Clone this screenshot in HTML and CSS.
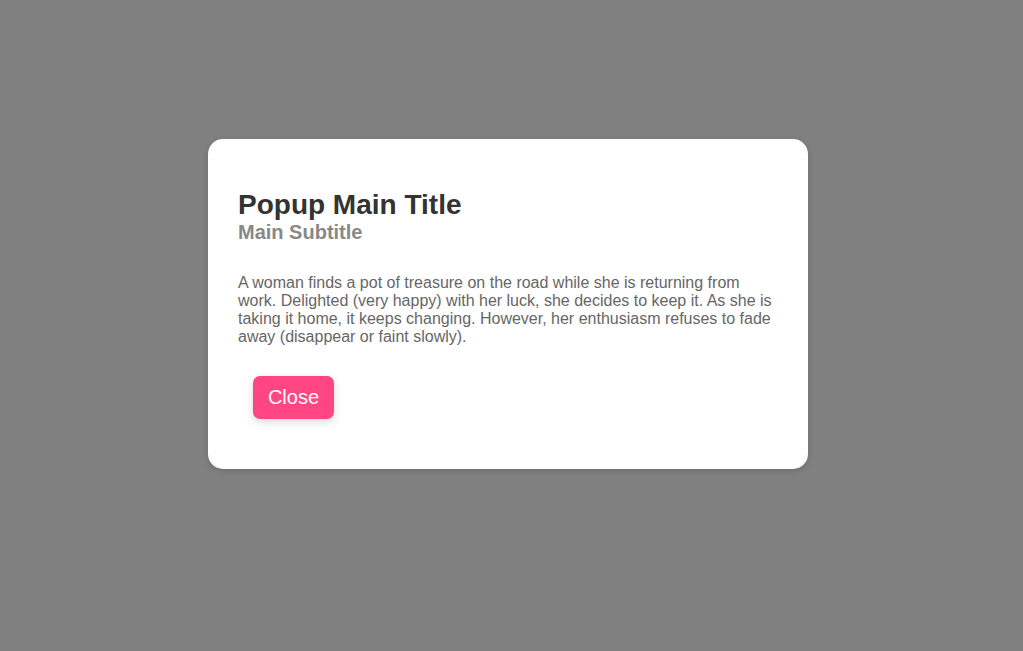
FILE: index.html
```html
<!DOCTYPE html>
<html>
<head>
<meta charset="utf-8">
<link rel="stylesheet" href="styles.css">
</head>
<body>
<div class="overlay">
  <div class="popup">
    <h1 class="title">Popup Main Title</h1>
    <h2 class="subtitle">Main Subtitle</h2>
    <p class="text">A woman finds a pot of treasure on the road while she is returning from work. Delighted (very happy) with her luck, she decides to keep it. As she is taking it home, it keeps changing. However, her enthusiasm refuses to fade away (disappear or faint slowly).</p>
    <div class="actions"><button class="close">Close</button></div>
  </div>
</div>
</body>
</html>
```
FILE: styles.css
```css
html, body {
  margin: 0;
  padding: 0;
  height: 100%;
}
body {
  background: #808080;
  font-family: "Liberation Sans", Arial, sans-serif;
}
.overlay {
  height: 100%;
  display: flex;
  justify-content: center;
  padding-top: 139px;
  padding-right: 7px;
  box-sizing: border-box;
}
.popup {
  width: 600px;
  height: 330px;
  box-sizing: border-box;
  background: #fff;
  border-radius: 15px;
  padding: 50px 30px 30px;
  box-shadow: 0 2px 6px rgba(0,0,0,0.15);
}
.title {
  margin: 0;
  font-size: 28px;
  line-height: 32px;
  color: #333;
  font-weight: bold;
}
.subtitle {
  margin: 0;
  font-size: 20px;
  line-height: 23px;
  color: #888;
  font-weight: bold;
}
.text {
  margin: 30px 0 0;
  font-size: 16px;
  line-height: 18px;
  color: #666;
}
.actions {
  margin-top: 30px;
  padding-left: 15px;
}
.close {
  width: 81px;
  height: 43px;
  border: none;
  border-radius: 7px;
  background: #ff4582;
  color: #fff;
  font-family: "Liberation Sans", Arial, sans-serif;
  font-size: 20px;
  padding: 0;
  box-shadow: 0 3px 8px rgba(0,0,0,0.15);
  cursor: pointer;
}
```
